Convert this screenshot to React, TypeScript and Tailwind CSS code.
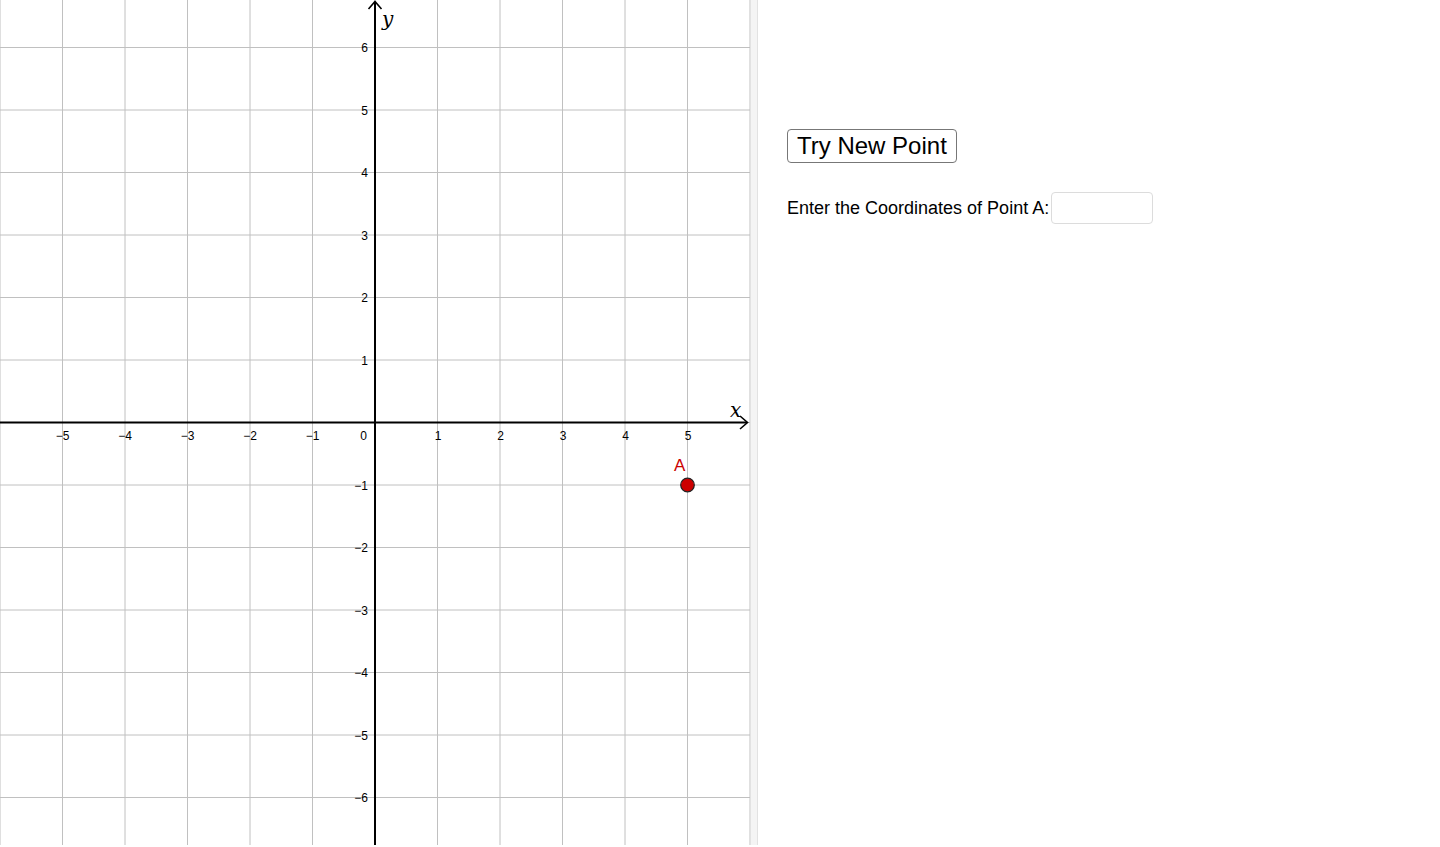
const W = 750;
const H = 845;
const OX = 375;
const OY = 422.5;
const S = 62.5;

const xs = Array.from({ length: 13 }, (_, i) => i - 6);
const ys = Array.from({ length: 15 }, (_, i) => i - 7);

function label(n: number) {
  return n < 0 ? `\u2212${-n}` : `${n}`;
}

function Graph() {
  return (
    <svg width={W} height={H} className="block">
      <rect width={W} height={H} fill="#ffffff" />
      {xs.map((k) => (
        <line key={`gx${k}`} x1={OX + k * S} y1={0} x2={OX + k * S} y2={H} stroke="#c0c0c0" strokeWidth={1} />
      ))}
      {ys.map((k) => (
        <line key={`gy${k}`} x1={0} y1={OY - k * S} x2={W} y2={OY - k * S} stroke="#c0c0c0" strokeWidth={1} />
      ))}
      <line x1={0} y1={OY} x2={747} y2={OY} stroke="#000" strokeWidth={2} />
      <path d="M740 416 L747.5 422.5 L740 429" fill="none" stroke="#000" strokeWidth={1.6} />
      <line x1={OX} y1={2} x2={OX} y2={H} stroke="#000" strokeWidth={2} />
      <path d="M368.5 9 L375 1.5 L381.5 9" fill="none" stroke="#000" strokeWidth={1.6} />
      <g fontFamily="'Liberation Sans', Arial, sans-serif" fontSize={12} fill="#000">
        {xs
          .filter((k) => k !== 0 && k >= -5 && k <= 5)
          .map((k) => (
            <text key={`lx${k}`} x={OX + k * S + (k < 0 ? 0 : 0.5)} y={439.5} textAnchor="middle">
              {label(k)}
            </text>
          ))}
        <text x={367} y={439.5} textAnchor="end">0</text>
        {ys
          .filter((k) => k !== 0 && k >= -6 && k <= 6)
          .map((k) => (
            <text key={`ly${k}`} x={368} y={OY - k * S + 4.5} textAnchor="end">
              {label(k)}
            </text>
          ))}
      </g>
      <text x={730} y={417} fontFamily="'DejaVu Serif', 'Liberation Serif', serif" fontStyle="italic" fontSize={20} fill="#000">
        x
      </text>
      <text x={382} y={26} fontFamily="'DejaVu Serif', 'Liberation Serif', serif" fontStyle="italic" fontSize={20} fill="#000">
        y
      </text>
      <text x={674} y={471} fontFamily="'Liberation Sans', Arial, sans-serif" fontSize={17} fill="#cc0000">
        A
      </text>
      <circle cx={687.5} cy={485} r={6.8} fill="#cc0000" stroke="#222" strokeWidth={1.2} />
    </svg>
  );
}

export default function App() {
  return (
    <div className="flex h-[847px] w-[1440px] bg-white font-['Liberation_Sans',Arial,sans-serif] text-black overflow-hidden">
      <div className="flex h-[845px]">
        <Graph />
        <div className="w-[8px] h-full bg-[#f4f4f4] border-x border-[#e2e2e2]" />
      </div>
      <div className="flex flex-col items-start pl-[29px] pt-[129px]">
        <button className="h-[34px] px-[9px] rounded-[4px] border border-[#777] bg-white text-[24px] leading-none text-black">
          Try New Point
        </button>
        <div className="mt-[29px] flex items-center">
          <span className="text-[18px] leading-none">Enter the Coordinates of Point A:</span>
          <input className="ml-[2px] h-[32px] w-[102px] rounded-[4px] border border-[#dcdcdc] bg-white outline-none" />
        </div>
      </div>
    </div>
  );
}
